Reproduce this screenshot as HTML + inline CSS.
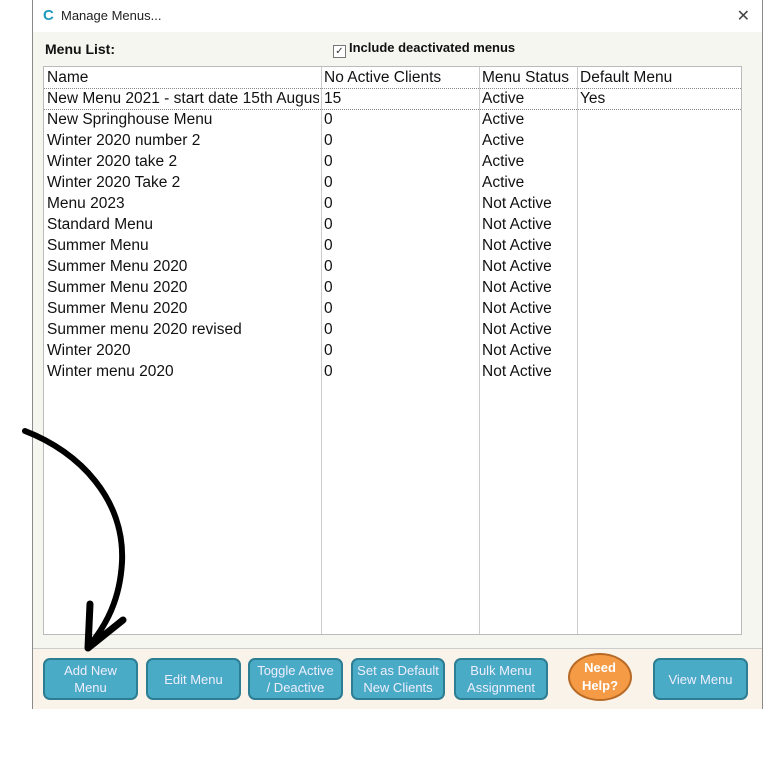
<!DOCTYPE html>
<html><head><meta charset="utf-8"><style>
body{margin:0;width:768px;height:768px;background:#fff;position:relative;overflow:hidden;font-family:"Liberation Sans",sans-serif}
.win{position:absolute;left:32px;top:0;width:729px;height:708px;border:1px solid #8a8a8a;border-top:none;background:#f4f6ef}
.title{position:absolute;left:0;top:0;width:729px;height:32px;background:#fff}
.title span{position:absolute;left:28px;top:8px;font-size:13px;color:#222}
.logo{position:absolute;left:10px;top:7px;font-weight:bold;color:#1e9bc0;font-size:15px}
.x{position:absolute;right:12px;top:6px;font-size:16px;color:#444;font-weight:300}
.ml{position:absolute;left:12px;top:41px;font-weight:bold;font-size:14px;color:#111}
.chk{position:absolute;left:300px;top:40px;font-size:13px;font-weight:bold;color:#111}
.chk i{display:inline-block;width:11px;height:11px;border:1px solid #777;background:#fff;vertical-align:-2px;margin-right:3px;font-style:normal;font-size:10px;line-height:11px;text-align:center;font-weight:normal;color:#333}
.tbl{position:absolute;left:10px;top:66px;width:697px;height:567px;background:#fff;border:1px solid #bbb}
.col{position:absolute;top:0;bottom:0;border-left:1px solid #ccc}
.row{position:absolute;left:0;width:697px;height:21px;font-size:15.5px;color:#111;line-height:22px}
.row div{position:absolute;top:0;white-space:nowrap;overflow:hidden}
.bar{position:absolute;left:0;top:648px;width:729px;height:60px;background:#faf3e9;border-top:1px solid #ccc}
.btn{position:absolute;top:9px;height:42px;width:91px;background:#4aabc6;border:2px solid #2d7d93;border-radius:7px;color:#eef;font-size:13px;display:flex;align-items:center;justify-content:center;text-align:center;line-height:17px;box-sizing:border-box}
.help{position:absolute;left:535px;top:4px;width:64px;height:48px;border-radius:50%;background:#f59a45;border:2px solid #b86a25;color:#fff;font-weight:bold;font-size:13px;display:flex;align-items:center;justify-content:center;text-align:center;line-height:18px;box-sizing:border-box}
</style></head><body>
<div class="win">
<div class="title"><div class="logo">C</div><span>Manage Menus...</span><div class="x">✕</div></div>
<div class="ml">Menu List:</div>
<div class="chk"><i>✓</i>Include deactivated menus</div>
<div class="tbl">
<div class="col" style="left:277px"></div><div class="col" style="left:435px"></div><div class="col" style="left:533px"></div>
<div class="row" style="top:0"><div style="left:3px">Name</div><div style="left:280px">No Active Clients</div><div style="left:438px">Menu Status</div><div style="left:536px">Default Menu</div></div>
<div class="row" style="top:21px;border-top:1px dotted #888;border-bottom:1px dotted #888;height:20px;line-height:20px"><div style="left:3px;width:272px">New Menu 2021 - start date 15th August</div><div style="left:280px">15</div><div style="left:438px">Active</div><div style="left:536px">Yes</div></div>
<div class="row" style="top:42px"><div style="left:3px">New Springhouse Menu</div><div style="left:280px">0</div><div style="left:438px">Active</div></div>
<div class="row" style="top:63px"><div style="left:3px">Winter 2020 number 2</div><div style="left:280px">0</div><div style="left:438px">Active</div></div>
<div class="row" style="top:84px"><div style="left:3px">Winter 2020 take 2</div><div style="left:280px">0</div><div style="left:438px">Active</div></div>
<div class="row" style="top:105px"><div style="left:3px">Winter 2020 Take 2</div><div style="left:280px">0</div><div style="left:438px">Active</div></div>
<div class="row" style="top:126px"><div style="left:3px">Menu 2023</div><div style="left:280px">0</div><div style="left:438px">Not Active</div></div>
<div class="row" style="top:147px"><div style="left:3px">Standard Menu</div><div style="left:280px">0</div><div style="left:438px">Not Active</div></div>
<div class="row" style="top:168px"><div style="left:3px">Summer Menu</div><div style="left:280px">0</div><div style="left:438px">Not Active</div></div>
<div class="row" style="top:189px"><div style="left:3px">Summer Menu 2020</div><div style="left:280px">0</div><div style="left:438px">Not Active</div></div>
<div class="row" style="top:210px"><div style="left:3px">Summer Menu 2020</div><div style="left:280px">0</div><div style="left:438px">Not Active</div></div>
<div class="row" style="top:231px"><div style="left:3px">Summer Menu 2020</div><div style="left:280px">0</div><div style="left:438px">Not Active</div></div>
<div class="row" style="top:252px"><div style="left:3px">Summer menu 2020 revised</div><div style="left:280px">0</div><div style="left:438px">Not Active</div></div>
<div class="row" style="top:273px"><div style="left:3px">Winter 2020</div><div style="left:280px">0</div><div style="left:438px">Not Active</div></div>
<div class="row" style="top:294px"><div style="left:3px">Winter menu 2020</div><div style="left:280px">0</div><div style="left:438px">Not Active</div></div>
</div>
<div class="bar">
<div class="btn" style="left:10px;width:95px">Add New<br>Menu</div>
<div class="btn" style="left:113px;width:95px">Edit Menu</div>
<div class="btn" style="left:215px;width:95px">Toggle Active<br>/ Deactive</div>
<div class="btn" style="left:318px;width:94px">Set as Default<br>New Clients</div>
<div class="btn" style="left:421px;width:94px">Bulk Menu<br>Assignment</div>
<div class="help">Need<br>Help?</div>
<div class="btn" style="left:620px;width:95px">View Menu</div>
</div>
</div>
<svg style="position:absolute;left:0;top:0" width="768" height="768">
<path d="M25 431 C 80 452, 125 500, 122 562 C 120 600, 106 625, 90 645" fill="none" stroke="#000" stroke-width="6" stroke-linecap="round"/>
<path d="M90 604 L 88 648 L 123 620" fill="none" stroke="#000" stroke-width="7" stroke-linecap="round" stroke-linejoin="round"/>
</svg>
</body></html>
